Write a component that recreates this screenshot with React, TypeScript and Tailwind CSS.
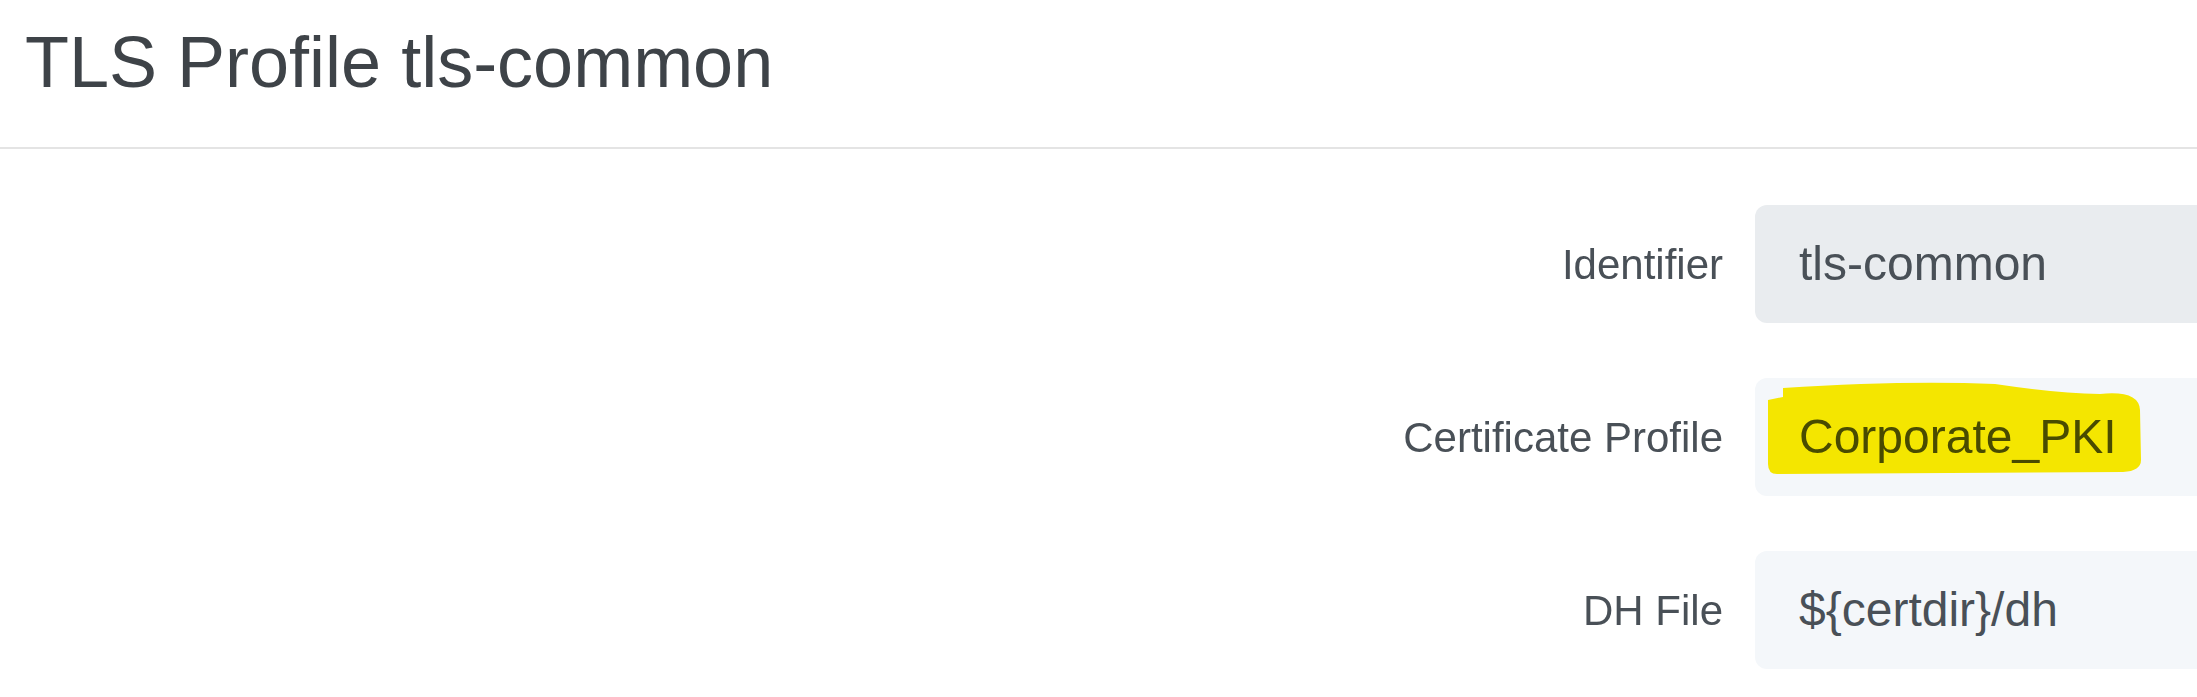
const fields = [
  { label: 'Identifier', value: 'tls-common', readOnly: true },
  { label: 'Certificate Profile', value: 'Corporate_PKI', highlight: true },
  { label: 'DH File', value: '${certdir}/dh' },
]

function Highlight() {
  // hand-drawn marker stroke over the value
  return (
    <svg
      className="pointer-events-none absolute left-0 top-0 mix-blend-multiply"
      width="400"
      height="118"
      viewBox="0 0 400 118"
    >
      <path
        d="M13 22 L28 19 L28 10 Q150 2 240 6 Q300 15 345 16 Q384 12 385 32 L386 82 Q386 93 368 94 L22 96 Q13 96 13 86 Z"
        fill="#ffee00"
      />
    </svg>
  )
}

export default function App() {
  return (
    <div
      className="h-[697px] w-[2197px] overflow-hidden bg-white text-[#495057]"
      style={{ fontFamily: '"Liberation Sans", Arial, sans-serif' }}
    >
      <header className="h-[149px] border-b-2 border-[#e4e4e4] pl-[25px] pt-[20px]">
        <h1 className="text-[72px] leading-[84px] text-[#3e4348]">TLS Profile tls-common</h1>
      </header>
      <form className="flex flex-col gap-[55px] pt-[56px]">
        {fields.map((f) => (
          <div key={f.label} className="flex items-center">
            <label className="w-[1755px] shrink-0 pr-[32px] text-right text-[42px]">{f.label}</label>
            <div
              className={
                'relative flex h-[118px] w-[600px] shrink-0 items-center rounded-[12px] pl-[44px] text-[48px] ' +
                (f.readOnly ? 'bg-[#e9ecef]' : 'bg-[#f4f7fa]')
              }
            >
              <span>{f.value}</span>
              {f.highlight && <Highlight />}
            </div>
          </div>
        ))}
      </form>
    </div>
  )
}
